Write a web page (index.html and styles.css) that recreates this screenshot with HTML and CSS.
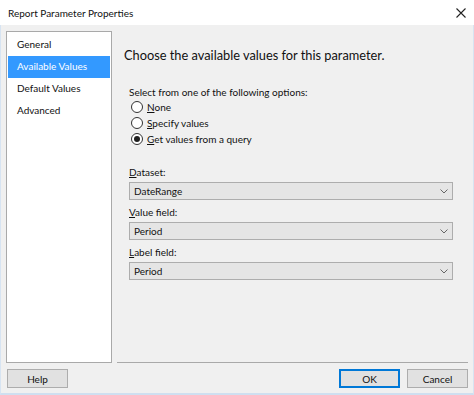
FILE: index.html
```html
<!DOCTYPE html>
<html lang="en">
<head>
    <meta charset="UTF-8">
    <meta name="viewport" content="width=device-width, initial-scale=1.0">
    <title>Report Parameter Properties</title>
    <link rel="stylesheet" href="styles.css">
</head>
<body>
    <div class="window">
        <div class="titlebar">
            <span class="title">Report Parameter Properties</span>
            <span class="close">
                <svg width="10" height="10" viewBox="0 0 10 10"><path d="M0.5 0.5 L9.5 9.5 M9.5 0.5 L0.5 9.5" stroke="#222" stroke-width="1.1" fill="none"/></svg>
            </span>
        </div>
        <div class="dialog">
            <div class="main">
                <ul class="nav-list">
                    <li>General</li>
                    <li class="selected">Available Values</li>
                    <li>Default Values</li>
                    <li>Advanced</li>
                </ul>
                <div class="pane">
                    <h2>Choose the available values for this parameter.</h2>
                    <div class="options">
                        <p class="options-label">Select from one of the following options:</p>
                        <label class="radio"><span class="circle"></span><span><u>N</u>one</span></label>
                        <label class="radio"><span class="circle"></span><span><u>S</u>pecify values</span></label>
                        <label class="radio"><span class="circle checked"></span><span><u>G</u>et values from a query</span></label>
                    </div>
                    <div class="fields">
                        <div class="field">
                            <div class="field-label"><u>D</u>ataset:</div>
                            <div class="combo"><span>DateRange</span><svg width="8" height="5" viewBox="0 0 8 5"><path d="M0.5 0.5 L4 4 L7.5 0.5" stroke="#666" stroke-width="1" fill="none"/></svg></div>
                        </div>
                        <div class="field">
                            <div class="field-label"><u>V</u>alue field:</div>
                            <div class="combo"><span>Period</span><svg width="8" height="5" viewBox="0 0 8 5"><path d="M0.5 0.5 L4 4 L7.5 0.5" stroke="#666" stroke-width="1" fill="none"/></svg></div>
                        </div>
                        <div class="field">
                            <div class="field-label"><u>L</u>abel field:</div>
                            <div class="combo"><span>Period</span><svg width="8" height="5" viewBox="0 0 8 5"><path d="M0.5 0.5 L4 4 L7.5 0.5" stroke="#666" stroke-width="1" fill="none"/></svg></div>
                        </div>
                    </div>
                </div>
            </div>
            <div class="footer">
                <button class="btn btn-help">Help</button>
                <div class="spacer"></div>
                <button class="btn btn-default">OK</button>
                <button class="btn">Cancel</button>
            </div>
        </div>
    </div>
</body>
</html>
```

FILE: styles.css
```css
body {
    margin: 0;
    font-family: Lato, "Noto Sans", sans-serif;
    font-size: 10px;
    color: #111;
    background: #fff;
}
.window {
    width: 474px;
    height: 395px;
    display: flex;
    flex-direction: column;
}
.titlebar {
    height: 25px;
    background: #fff;
    display: flex;
    align-items: center;
    justify-content: space-between;
    padding: 0 8px 0 8px;
    font-size: 10px;
    color: #111;
}
.close {
    display: flex;
}
.dialog {
    flex: 1;
    background: #f0f0f0;
    border-left: 1px solid #d7e4f2;
    border-right: 1px solid #d7e4f2;
    border-bottom: 2px solid #cfdff0;
    padding: 6px 5px 0 5px;
    display: flex;
    flex-direction: column;
}
.main {
    display: flex;
    height: 332px;
}
.nav-list {
    list-style: none;
    margin: 0;
    padding: 2px 1px 0 1px;
    width: 102px;
    background: #fff;
    border: 1px solid #a9a9a9;
}
.nav-list li {
    height: 22px;
    line-height: 21px;
    padding-left: 9px;
    color: #111;
}
.nav-list li.selected {
    background: #3399ff;
    color: #fff;
}
.pane {
    flex: 1;
    margin-left: 5px;
    border-bottom: 1px solid #a9a9a9;
    padding: 14px 15px 0 7px;
}
h2 {
    margin: 0;
    font-size: 12.8px;
    font-weight: normal;
    line-height: 20px;
    color: #111;
}
.options {
    padding-left: 5px;
    margin-top: 20px;
}
.options-label {
    margin: 0;
    line-height: 14px;
}
.radio {
    display: flex;
    align-items: center;
    height: 16px;
    padding-left: 2px;
}
.circle {
    width: 12px;
    height: 12px;
    border: 1px solid #333;
    border-radius: 50%;
    background: #fff;
    margin-right: 4px;
    box-sizing: border-box;
    display: flex;
    align-items: center;
    justify-content: center;
}
.circle.checked::after {
    content: "";
    width: 6px;
    height: 6px;
    border-radius: 50%;
    background: #1e1e1e;
}
.fields {
    padding-left: 5px;
    margin-top: 17px;
}
.field {
    margin-bottom: 4px;
}
.field-label {
    line-height: 16px;
    margin-bottom: 2px;
}
.combo {
    height: 18px;
    box-sizing: border-box;
    border: 1px solid #adadad;
    background: #e5e5e5;
    display: flex;
    align-items: center;
    justify-content: space-between;
    padding: 0 4px 0 4px;
}
.footer {
    display: flex;
    align-items: center;
    padding: 6px 0 0 1px;
}
.spacer {
    flex: 1;
}
.btn {
    width: 61px;
    height: 19px;
    font-family: inherit;
    font-size: 10px;
    color: #111;
    background: #e1e1e1;
    border: 1px solid #adadad;
    padding: 0;
    margin-left: 7px;
}
.btn-help {
    margin-left: 0;
}
.btn-default {
    border: 2px solid #0078d7;
}
```
